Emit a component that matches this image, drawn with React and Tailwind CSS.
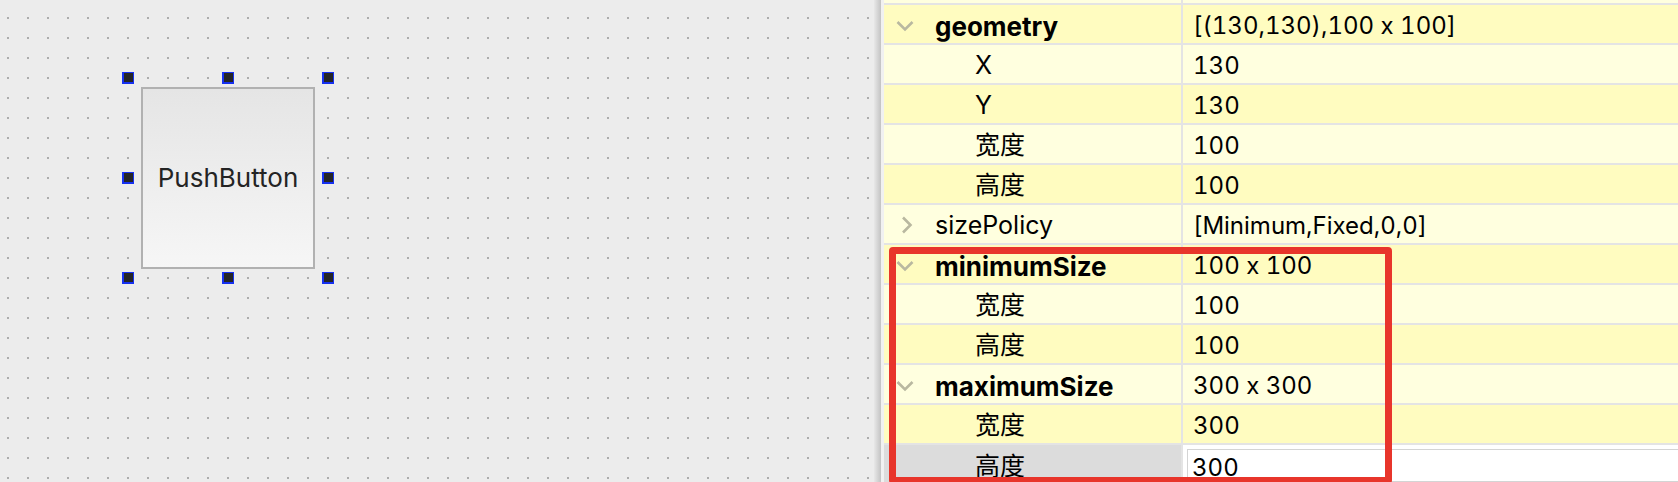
import React from "react";

const rows = [
  { label: "geometry", value: "[(130,130),100 x 100]", kind: "group", chev: "down", tone: "dark" },
  { label: "X", value: "130", kind: "sub", tone: "light" },
  { label: "Y", value: "130", kind: "sub", tone: "dark" },
  { label: "宽度", value: "100", kind: "sub", tone: "light" },
  { label: "高度", value: "100", kind: "sub", tone: "dark" },
  { label: "sizePolicy", value: "[Minimum,Fixed,0,0]", kind: "plain", chev: "right", tone: "light" },
  { label: "minimumSize", value: "100 x 100", kind: "group", chev: "down", tone: "dark" },
  { label: "宽度", value: "100", kind: "sub", tone: "light" },
  { label: "高度", value: "100", kind: "sub", tone: "dark" },
  { label: "maximumSize", value: "300 x 300", kind: "group", chev: "down", tone: "light" },
  { label: "宽度", value: "300", kind: "sub", tone: "dark" },
];

function Chevron({ dir }) {
  if (dir === "down") {
    return (
      <svg width="18" height="12" viewBox="0 0 18 12" className="absolute left-[12px] top-[15px]">
        <polyline points="1.5,2 9,9.5 16.5,2" fill="none" stroke="#b9b8a0" strokeWidth="2.6" />
      </svg>
    );
  }
  return (
    <svg width="12" height="18" viewBox="0 0 12 18" className="absolute left-[17px] top-[11px]">
      <polyline points="2,1.5 9.5,9 2,16.5" fill="none" stroke="#b9b8a0" strokeWidth="2.6" />
    </svg>
  );
}

function Row({ r }) {
  const bg = r.tone === "dark" ? "bg-[#fffcc0]" : "bg-[#ffffdf]";
  return (
    <div className={`flex h-[40px] border-b-2 border-[#e4e4e4] ${bg}`}>
      <div className="relative flex w-[297px] shrink-0 items-center pt-[4px]">
        {r.chev && <Chevron dir={r.chev} />}
        <span
          className={
            r.kind === "sub"
              ? "pl-[91px] text-[25px] text-black"
              : r.kind === "group"
              ? "pl-[51px] text-[26px] font-bold text-black"
              : "pl-[51px] text-[25px] text-black"
          }
        >
          {r.label}
        </span>
      </div>
      <div className="w-[2px] shrink-0 bg-[#e4e4e4]" />
      <div className="flex flex-1 items-center pl-[10px] pt-[4px] text-[24px] text-black">{r.value}</div>
    </div>
  );
}

function Handle({ x, y }) {
  return (
    <div className="absolute h-[12px] w-[12px] bg-[#1530f0]" style={{ left: x, top: y }}>
      <div className="absolute right-[1px] top-[1px] h-[9px] w-[9px] bg-[#252525]" />
    </div>
  );
}

export default function App() {
  const hx = [122, 222, 322];
  const hy = [72, 172, 272];
  const handles = [];
  hy.forEach((y, j) =>
    hx.forEach((x, i) => {
      if (i === 1 && j === 1) return;
      handles.push(<Handle key={`${i}-${j}`} x={x} y={y} />);
    })
  );

  return (
    <div className="flex h-[482px] w-[1678px] overflow-hidden bg-[#ececec] font-['Inter','Noto_Sans_CJK_SC',sans-serif] [font-feature-settings:'calt'_0,'tnum'_1]">
      {/* canvas */}
      <div className="relative h-full w-[874px] shrink-0 bg-[#ececec] bg-[radial-gradient(circle,#acacac_1px,transparent_1.4px)] bg-[size:20px_20px] bg-[position:-2px_8px]">
        <div className="absolute left-[141px] top-[87px] flex h-[182px] w-[174px] items-center justify-center border-2 border-[#b1b1b1] bg-linear-to-b from-[#e5e5e5] to-[#f6f6f6]">
          <span className="pb-[2px] text-[26px] text-[#242424]">PushButton</span>
        </div>
        {handles}
      </div>
      {/* splitter */}
      <div className="h-full w-[7px] shrink-0 bg-linear-to-r from-[#e8e8e8] to-[#c3c3c3]" />
      <div className="h-full w-[3px] shrink-0 bg-[#f1f1f1]" />
      {/* property editor */}
      <div className="relative flex h-full flex-1 flex-col">
        <div className="flex h-[5px] shrink-0 border-b-2 border-[#e4e4e4] bg-[#ffffdf]">
          <div className="w-[297px] shrink-0" />
          <div className="w-[2px] shrink-0 bg-[#e4e4e4]" />
        </div>
        {rows.map((r, i) => (
          <Row key={i} r={r} />
        ))}
        <div className="flex h-[40px] shrink-0">
          <div className="flex w-[297px] shrink-0 items-center bg-[#dcdcdc] pt-[4px]">
            <span className="pl-[91px] text-[25px] text-black">高度</span>
          </div>
          <div className="w-[2px] shrink-0 bg-[#e4e4e4]" />
          <div className="flex flex-1 bg-white pl-[4px] pt-[4px]">
            <div className="flex h-[33px] flex-1 items-center border-b border-l border-t border-[#d4d4d4] bg-white pl-[4px] pt-[4px] text-[24px] text-black">
              300
            </div>
          </div>
        </div>
        {/* red annotation frame */}
        <div className="pointer-events-none absolute left-[5px] top-[247px] h-[237px] w-[503px] rounded-[4px] border-[7px] border-[#e8352b]" />
      </div>
    </div>
  );
}
